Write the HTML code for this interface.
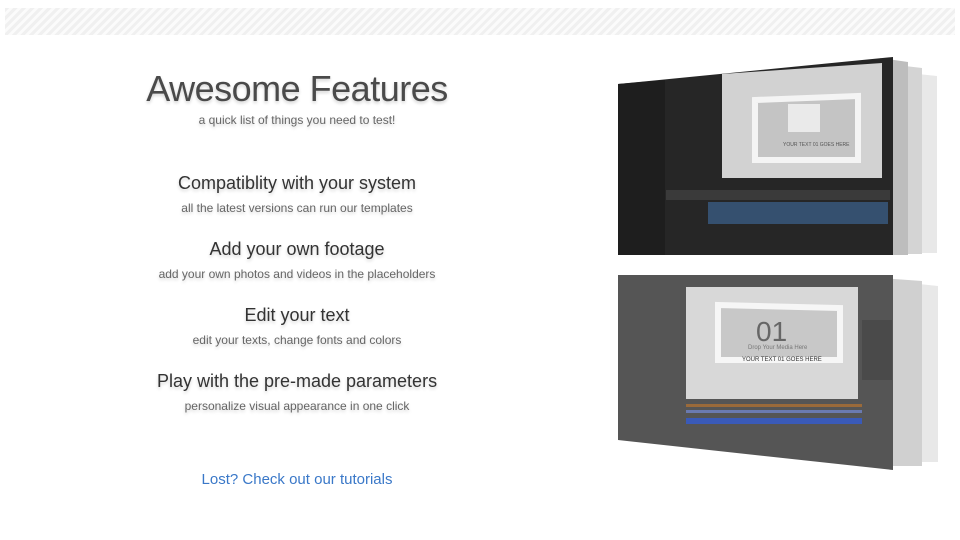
<!DOCTYPE html>
<html><head><style>
body{margin:0;width:960px;height:540px;background:#fff;position:relative;overflow:hidden;font-family:"Liberation Sans",sans-serif}
.band{position:absolute;left:5px;top:8px;width:950px;height:27px;background:repeating-linear-gradient(135deg,#f0f0f0 0 3px,#fbfbfb 3px 6px)}
.t{position:absolute;left:97px;width:400px;text-align:center;white-space:nowrap;text-shadow:0 2px 3px rgba(0,0,0,.18)}
.h1{font-size:36px;color:#4a4a4a;top:68px;letter-spacing:-.5px}
.s{font-size:12px;color:#666}
.h{font-size:18px;color:#333}
.l{font-size:15px;color:#3a78c8;text-shadow:none}
.p{position:absolute}
</style></head><body>
<div class="band"></div>
<div class="t h1">Awesome Features</div>
<div class="t s" style="top:113px">a quick list of things you need to test!</div>
<div class="t h" style="top:173px">Compatiblity with your system</div>
<div class="t s" style="top:201px">all the latest versions can run our templates</div>
<div class="t h" style="top:239px">Add your own footage</div>
<div class="t s" style="top:267px">add your own photos and videos in the placeholders</div>
<div class="t h" style="top:305px">Edit your text</div>
<div class="t s" style="top:333px">edit your texts, change fonts and colors</div>
<div class="t h" style="top:371px">Play with the pre-made parameters</div>
<div class="t s" style="top:399px">personalize visual appearance in one click</div>
<div class="t l" style="top:471px">Lost? Check out our tutorials</div>

<svg class="p" style="left:0;top:0" width="960" height="540">
<polygon points="880,70 937,76 937,253 880,253" fill="#e8e8e8"/>
<polygon points="880,63 922,68 922,254 880,254" fill="#d4d4d4"/>
<polygon points="880,58 908,62 908,255 880,255" fill="#bdbdbd"/>
<polygon points="618,84 893,57 893,255 618,255" fill="#262626"/>
<polygon points="618,84 665,80 665,255 618,255" fill="#1e1e1e"/>
<polygon points="722,74 882,63 882,178 722,178" fill="#d2d2d2"/>
<polygon points="755,100 858,96 858,160 755,160" fill="#c4c4c4" stroke="#f4f4f4" stroke-width="6"/>
<rect x="788" y="104" width="32" height="28" fill="#eaeaea"/>
<text x="783" y="146" font-size="5" fill="#555" font-family="Liberation Sans">YOUR TEXT 01 GOES HERE</text>
<rect x="666" y="190" width="224" height="10" fill="#3a3a3a"/>
<rect x="708" y="202" width="180" height="22" fill="#35506f"/>
<polygon points="880,280 938,286 938,462 880,462" fill="#e8e8e8"/>
<polygon points="880,278 922,281 922,466 880,466" fill="#d0d0d0"/>
<polygon points="618,275 893,275 893,470 618,440" fill="#555"/>
<rect x="686" y="287" width="172" height="112" fill="#d8d8d8"/>
<polygon points="718,305 840,308 840,360 718,360" fill="#c8c8c8" stroke="#f6f6f6" stroke-width="6"/>
<text x="756" y="341" font-size="28" fill="#666" font-family="Liberation Sans">01</text>
<text x="748" y="349" font-size="6" fill="#777" font-family="Liberation Sans">Drop Your Media Here</text>
<text x="742" y="361" font-size="6" fill="#333" font-family="Liberation Sans">YOUR TEXT 01 GOES HERE</text>
<rect x="686" y="404" width="176" height="3" fill="#9a6a3a"/>
<rect x="686" y="410" width="176" height="3" fill="#6a7ab0"/>
<rect x="686" y="418" width="176" height="6" fill="#3a5ab8"/>
<rect x="862" y="320" width="30" height="60" fill="#4a4a4a"/>
</svg>
</body></html>
